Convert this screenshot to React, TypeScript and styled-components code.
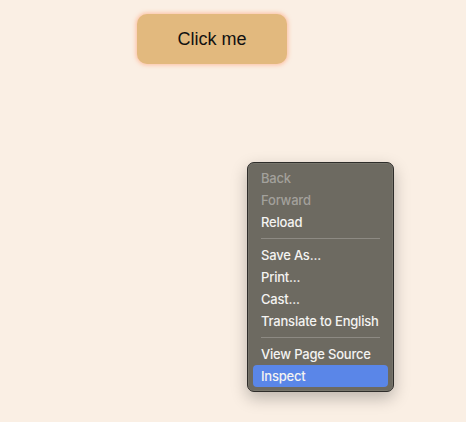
import React from "react";
import styled, { createGlobalStyle } from "styled-components";

const Global = createGlobalStyle`
  html, body { margin: 0; padding: 0; }
  body {
    background: #faefe4;
    width: 466px;
    height: 422px;
    overflow: hidden;
    font-family: "Liberation Sans", Arial, sans-serif;
  }
`;

const Page = styled.div`
  position: relative;
  width: 466px;
  height: 422px;
  padding: 14px 0 0 137px;
  box-sizing: border-box;
`;

const Button = styled.button`
  width: 150px;
  height: 50px;
  border: none;
  border-radius: 10px;
  background: #e2b97e;
  box-shadow: 0 0 4px 1px rgba(255, 170, 130, 0.7);
  font-family: "Liberation Sans", Arial, sans-serif;
  font-size: 18px;
  color: #111;
  cursor: pointer;
`;

const Menu = styled.div`
  position: absolute;
  left: 247px;
  top: 162px;
  width: 147px;
  height: 230px;
  box-sizing: border-box;
  background: #6d6a61;
  border: 1px solid #2e2d2a;
  border-radius: 7px;
  padding: 4px 5px;
  box-shadow: 0 0 0 0.5px rgba(255,255,255,0.15) inset, 0 6px 16px rgba(0, 0, 0, 0.25);
  display: flex;
  flex-direction: column;
  font-family: "Inter", "Noto Sans", sans-serif;
`;

const Item = styled.div<{ $disabled?: boolean; $active?: boolean }>`
  height: 22px;
  display: flex;
  align-items: center;
  padding: 0 8px;
  border-radius: 4px;
  font-size: 13px;
  font-weight: 500;
  letter-spacing: -0.2px;
  color: ${(p) => (p.$disabled ? "rgba(255,255,255,0.38)" : "#f4f3f1")};
  background: ${(p) => (p.$active ? "#5a86e8" : "transparent")};
`;

const Separator = styled.div`
  height: 11px;
  display: flex;
  align-items: center;
  padding: 0 8px;
  &::after {
    content: "";
    flex: 1;
    height: 1px;
    background: rgba(255, 255, 255, 0.22);
  }
`;

export default function App() {
  return (
    <>
      <Global />
      <Page>
        <Button>Click me</Button>
        <Menu>
          <Item $disabled>Back</Item>
          <Item $disabled>Forward</Item>
          <Item>Reload</Item>
          <Separator />
          <Item>Save As...</Item>
          <Item>Print...</Item>
          <Item>Cast...</Item>
          <Item>Translate to English</Item>
          <Separator />
          <Item>View Page Source</Item>
          <Item $active>Inspect</Item>
        </Menu>
      </Page>
    </>
  );
}
